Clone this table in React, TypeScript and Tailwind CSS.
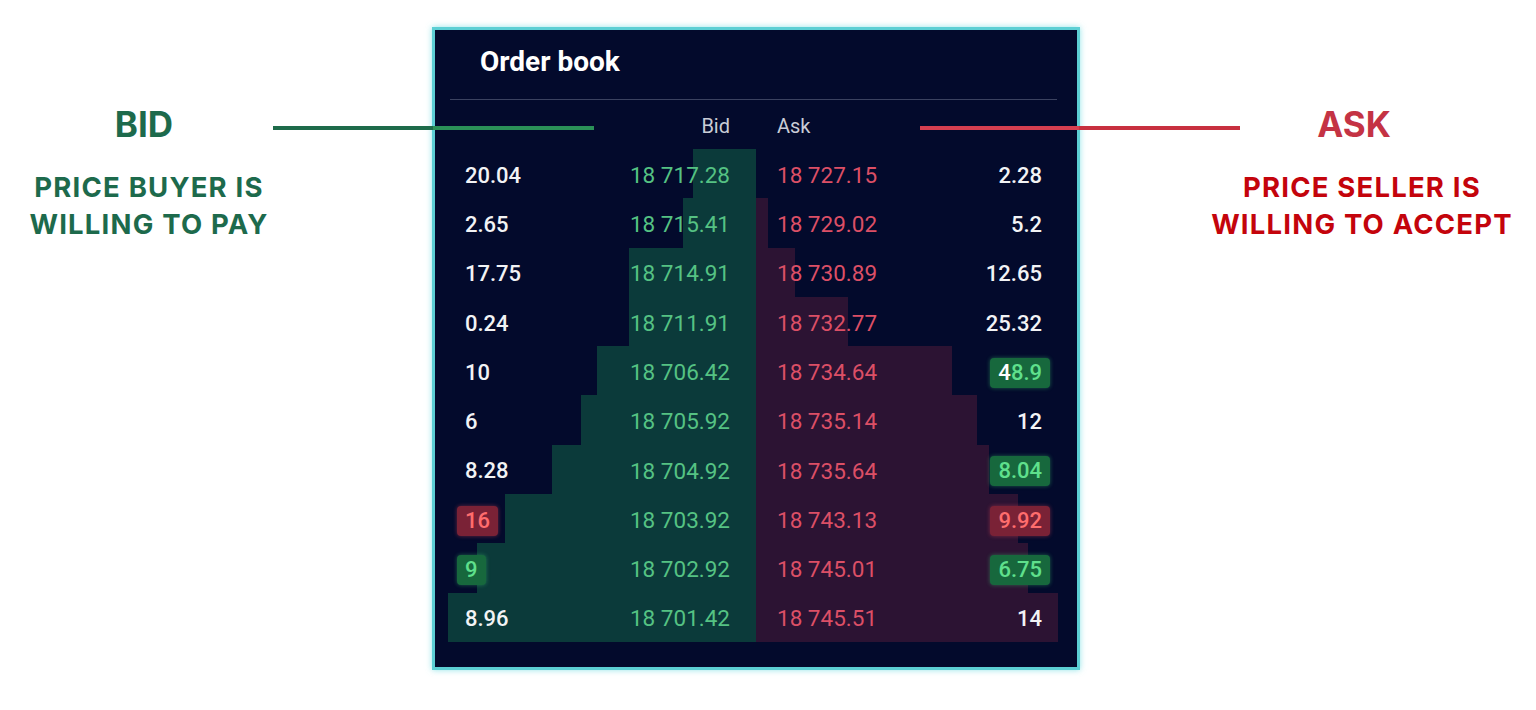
import React from 'react';

type Badge = 'green' | 'red' | null;

interface Row {
  amount: string;
  amountBadge: Badge;
  bid: string;
  ask: string;
  total: React.ReactNode;
  totalBadge: Badge;
  bidDepth: number;
  askDepth: number;
}

const rows: Row[] = [
  { amount: '20.04', amountBadge: null, bid: '18 717.28', ask: '18 727.15', total: '2.28', totalBadge: null, bidDepth: 63, askDepth: 0 },
  { amount: '2.65', amountBadge: null, bid: '18 715.41', ask: '18 729.02', total: '5.2', totalBadge: null, bidDepth: 73, askDepth: 12 },
  { amount: '17.75', amountBadge: null, bid: '18 714.91', ask: '18 730.89', total: '12.65', totalBadge: null, bidDepth: 127, askDepth: 39 },
  { amount: '0.24', amountBadge: null, bid: '18 711.91', ask: '18 732.77', total: '25.32', totalBadge: null, bidDepth: 127, askDepth: 92 },
  {
    amount: '10', amountBadge: null, bid: '18 706.42', ask: '18 734.64',
    total: (<><span className="text-white">4</span>8.9</>), totalBadge: 'green', bidDepth: 159, askDepth: 196,
  },
  { amount: '6', amountBadge: null, bid: '18 705.92', ask: '18 735.14', total: '12', totalBadge: null, bidDepth: 175, askDepth: 221 },
  { amount: '8.28', amountBadge: null, bid: '18 704.92', ask: '18 735.64', total: '8.04', totalBadge: 'green', bidDepth: 204, askDepth: 233 },
  { amount: '16', amountBadge: 'red', bid: '18 703.92', ask: '18 743.13', total: '9.92', totalBadge: 'red', bidDepth: 251, askDepth: 262 },
  { amount: '9', amountBadge: 'green', bid: '18 702.92', ask: '18 745.01', total: '6.75', totalBadge: 'green', bidDepth: 279, askDepth: 272 },
  { amount: '8.96', amountBadge: null, bid: '18 701.42', ask: '18 745.51', total: '14', totalBadge: null, bidDepth: 308, askDepth: 302 },
];

const badgeClass = (badge: Badge) => {
  if (badge === 'green') return 'rounded-[4px] bg-[#17683d] text-[#5fe08c] px-2 shadow-[0_0_4px_rgba(60,200,110,0.45)]';
  if (badge === 'red') return 'rounded-[4px] bg-[#7a2236] text-[#ff6d6d] px-2 shadow-[0_0_4px_rgba(230,70,90,0.45)]';
  return 'text-[#f2f3f5]';
};

const OrderRow = ({ row }: { row: Row }) => (
  <div className="flex h-[49.3px] font-['Roboto',sans-serif] text-[22px]">
    {/* bid side */}
    <div className="relative w-[308px] h-full">
      <div className="absolute inset-y-0 right-0 bg-[#0b3a3a]" style={{ width: row.bidDepth }} />
      <div className="relative flex h-full items-center justify-between pt-[4px] pl-[17px] pr-[26px]">
        <span className={`font-medium leading-[30px] ${row.amountBadge ? '-ml-2 ' : ''}${badgeClass(row.amountBadge)}`}>
          {row.amount}
        </span>
        <span className="text-[22.5px] text-[#55c283]">{row.bid}</span>
      </div>
    </div>
    {/* ask side */}
    <div className="relative w-[302px] h-full">
      <div className="absolute inset-y-0 left-0 bg-[#2c1333]" style={{ width: row.askDepth }} />
      <div className="relative flex h-full items-center justify-between pt-[4px] pl-[21px] pr-[16px]">
        <span className="text-[22.5px] text-[#dc4f66]">{row.ask}</span>
        <span className={`font-medium leading-[30px] ${row.totalBadge ? '-mr-2 ' : ''}${badgeClass(row.totalBadge)}`}>
          {row.total}
        </span>
      </div>
    </div>
  </div>
);

const App: React.FC = () => {
  return (
    <div className="relative w-full h-[710px] bg-white overflow-hidden">
      <div className="flex pt-[27px]">
        {/* Bid explanation */}
        <div className="w-[432px] shrink-0">
          <div className="w-[298px] pt-[80px] text-center font-['Inter',sans-serif] font-bold text-[#1d6a4c]">
            <div className="text-[35px] leading-[34px] pr-[10px]">BID</div>
            <div className="mt-[28px] text-[27.5px] leading-[37px] tracking-[1.2px]">
              PRICE BUYER IS
              <br />
              WILLING TO PAY
            </div>
          </div>
        </div>

        {/* Order book panel */}
        <div className="w-[648px] h-[643px] shrink-0 border-[3px] border-[#5ccfd4] bg-[#030a2c] shadow-[0_0_6px_rgba(110,220,225,0.75)]">
          <div className="pt-[14px] pl-[45px] h-[36px] box-content font-['Roboto',sans-serif] text-[28px] font-bold leading-[36px] text-white">
            Order book
          </div>
          <div className="mt-[19px] ml-[15px] mr-[20px] h-px bg-[#3b4260]" />
          <div className="flex h-[49px] pt-[3px] items-center font-['Roboto',sans-serif] text-[20px] text-[#c9ccd6] ml-[13px]">
            <div className="w-[308px] pr-[26px] text-right">Bid</div>
            <div className="w-[302px] pl-[21px]">Ask</div>
          </div>
          <div className="ml-[13px] mr-[19px]">
            {rows.map((row, i) => (
              <OrderRow key={i} row={row} />
            ))}
          </div>
        </div>

        {/* Ask explanation */}
        <div className="flex-1">
          <div className="ml-[104px] w-[356px] pt-[80px] text-center font-['Inter',sans-serif] font-bold">
            <div className="text-[35px] leading-[34px] text-[#c43344] pr-[16px]">ASK</div>
            <div className="mt-[28px] text-[27.5px] leading-[37px] tracking-[1.2px] text-[#c4040c]">
              PRICE SELLER IS
              <br />
              WILLING TO ACCEPT
            </div>
          </div>
        </div>
      </div>

      {/* pointer lines */}
      <div className="absolute left-[273px] top-[126px] w-[160px] h-[4px] bg-[#1e6b4a]" />
      <div className="absolute left-[433px] top-[126px] w-[161px] h-[4px] bg-[#2b9158]" />
      <div className="absolute left-[920px] top-[126px] w-[159px] h-[4px] bg-[#d63f50]" />
      <div className="absolute left-[1079px] top-[126px] w-[161px] h-[4px] bg-[#c8303f]" />
    </div>
  );
};

export default App;
